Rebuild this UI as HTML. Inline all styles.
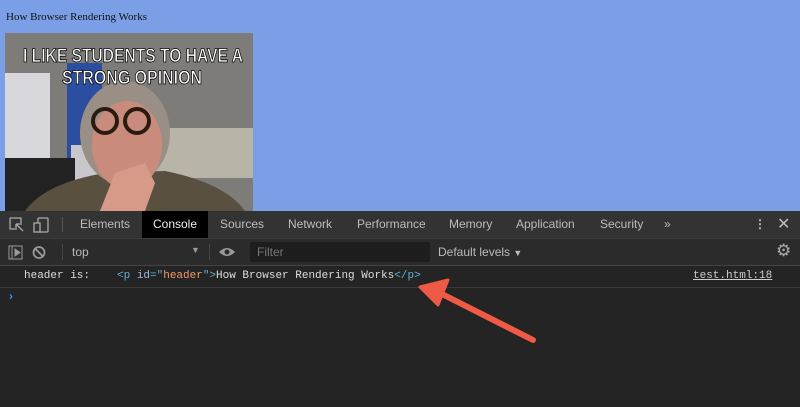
<!DOCTYPE html>
<html><head><style>
body{margin:0;width:800px;height:407px;overflow:hidden;background:#7b9fe6;font-family:"Liberation Sans",sans-serif;position:relative}
.t{position:absolute;left:6px;top:11px;font:11px "Liberation Serif",serif;color:#111}
.dt{position:absolute;left:0;top:211px;width:800px;height:196px;background:#242424}
.tabs{position:absolute;top:0;left:0;width:800px;height:27px;background:#333;border-bottom:1px solid #3d3d3d}
.tab{position:absolute;top:0;height:27px;line-height:27px;font-size:12px;color:#bdbdbd}
.bar{position:absolute;top:28px;left:0;width:800px;height:26px;background:#2b2b2b;border-bottom:1px solid #444}
.row{position:absolute;top:55px;left:0;width:800px;height:21px;border-bottom:1px solid #3a3a3a;font:11px "Liberation Mono",monospace;color:#ddd;line-height:21px}
</style></head><body>
<div class="t">How Browser Rendering Works</div>
<svg style="position:absolute;left:5px;top:33px" width="248" height="178" viewBox="0 0 248 178">
<rect width="248" height="178" fill="#7d7c78"/>
<rect x="0" y="40" width="45" height="95" fill="#d8d8dc"/>
<rect x="62" y="30" width="35" height="125" fill="#2b4ea0"/>
<rect x="66" y="112" width="30" height="38" fill="#c8c8cc"/>
<rect x="150" y="95" width="98" height="50" fill="#b8b4a8"/>
<rect x="0" y="125" width="70" height="53" fill="#222"/>
<path d="M20 178 Q40 150 100 140 L160 138 Q220 150 240 178Z" fill="#5a5040"/>
<ellipse cx="120" cy="100" rx="45" ry="52" fill="#9a8f86"/>
<ellipse cx="122" cy="112" rx="35" ry="44" fill="#c98c7c"/>
<circle cx="100" cy="88" r="12" fill="none" stroke="#2a1a10" stroke-width="4"/>
<circle cx="132" cy="88" r="12" fill="none" stroke="#2a1a10" stroke-width="4"/>
<path d="M95 178 L110 140 L140 130 L150 150 L140 178Z" fill="#d89a88"/>
<text x="18" y="29" textLength="220" lengthAdjust="spacingAndGlyphs" font-family="Liberation Sans" font-weight="bold" font-size="19" fill="#fff" stroke="#000" stroke-width="0.8">I LIKE STUDENTS TO HAVE A</text>
<text x="57" y="51" textLength="140" lengthAdjust="spacingAndGlyphs" font-family="Liberation Sans" font-weight="bold" font-size="19" fill="#fff" stroke="#000" stroke-width="0.8">STRONG OPINION</text>
</svg>
<div class="dt">
<div class="tabs">
<svg style="position:absolute;left:9px;top:6px" width="44" height="16"><path d="M1 1h11v5M1 1v11h5M7 7l7 7M7 7v6M7 7h6" stroke="#aaa" fill="none" stroke-width="1.3"/><rect x="29" y="1" width="10" height="14" rx="1" stroke="#aaa" fill="none" stroke-width="1.3"/><rect x="25" y="6" width="6" height="9" stroke="#aaa" fill="#333" stroke-width="1.3"/></svg>
<div style="position:absolute;left:62px;top:6px;width:1px;height:15px;background:#555"></div>
<div class="tab" style="left:80px">Elements</div>
<div class="tab" style="left:142px;width:66px;background:#000;color:#eee;text-align:center">Console</div>
<div class="tab" style="left:220px">Sources</div>
<div class="tab" style="left:288px">Network</div>
<div class="tab" style="left:357px">Performance</div>
<div class="tab" style="left:449px">Memory</div>
<div class="tab" style="left:516px">Application</div>
<div class="tab" style="left:600px">Security</div>
<div class="tab" style="left:664px">»</div>
<div class="tab" style="left:754px;font-weight:bold">⋮</div>
<div class="tab" style="left:777px;font-size:16px">✕</div>
</div>
<div class="bar">
<svg style="position:absolute;left:8px;top:6px" width="40" height="15"><rect x="1" y="1" width="13" height="13" stroke="#999" fill="none"/><path d="M4 1v13M7 4l5 3.5-5 3.5z" stroke="#999" fill="#999"/><circle cx="31" cy="7.5" r="5.5" stroke="#999" fill="none" stroke-width="1.8"/><path d="M27 3.5l8 8" stroke="#999" stroke-width="1.8"/></svg>
<div style="position:absolute;left:62px;top:5px;width:1px;height:16px;background:#444"></div>
<div style="position:absolute;left:72px;top:6px;font-size:12px;color:#bbb">top</div>
<div style="position:absolute;left:191px;top:6px;font-size:9px;color:#999">▼</div>
<div style="position:absolute;left:209px;top:5px;width:1px;height:16px;background:#444"></div>
<svg style="position:absolute;left:218px;top:7px" width="18" height="12"><path d="M1 6Q9-2 17 6Q9 14 1 6Z" fill="#999"/><circle cx="9" cy="6" r="2.5" fill="#2b2b2b"/></svg>
<div style="position:absolute;left:250px;top:3px;width:180px;height:20px;background:#1d1d1d"></div>
<div style="position:absolute;left:257px;top:6px;font-size:12px;color:#777">Filter</div>
<div style="position:absolute;left:438px;top:6px;font-size:12px;color:#bbb">Default levels <span style="font-size:9px">▼</span></div>
<div style="position:absolute;left:776px;top:2px;font-size:17px;color:#aaa">⚙</div>
</div>
<div class="row"><span style="position:absolute;left:24px">header is:</span><span style="position:absolute;left:117px"><span style="color:#5db0d7">&lt;p </span><span style="color:#9bbbdc">id</span><span style="color:#5db0d7">="</span><span style="color:#f29766">header</span><span style="color:#5db0d7">"&gt;</span>How Browser Rendering Works<span style="color:#5db0d7">&lt;/p&gt;</span></span><span style="position:absolute;left:693px;text-decoration:underline;color:#ccc">test.html:18</span></div>
<div style="position:absolute;left:9px;top:78px;color:#3b8bf0;font-size:12px;font-weight:bold">›</div>
</div>
<svg style="position:absolute;left:0;top:0" width="800" height="407"><path d="M533 340L440 293" stroke="#ee5a45" stroke-width="6" stroke-linecap="round"/><path d="M420 287L448 280L438 305Z" fill="#ee5a45" stroke="#ee5a45" stroke-width="3" stroke-linejoin="round"/></svg>
</body></html>
